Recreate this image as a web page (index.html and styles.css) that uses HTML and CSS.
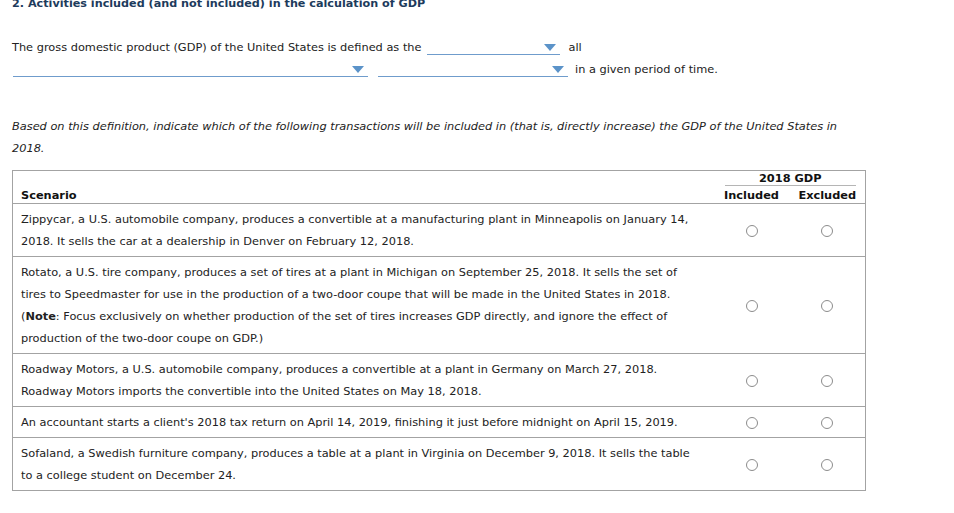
FILE: index.html
```html
<!DOCTYPE html>
<html lang="en">
<head>
<meta charset="utf-8">
<title>GDP activities</title>
<link rel="stylesheet" href="styles.css">
</head>
<body>
<div class="page">
  <h2 class="title">2. Activities included (and not included) in the calculation of GDP</h2>

  <div class="definition">
    <div class="line">
      <span>The gross domestic product (GDP) of the United States is defined as the</span>
      <span class="select w1"><span class="arrow"></span></span>
      <span>all</span>
    </div>
    <div class="line">
      <span class="select w2"><span class="arrow"></span></span>
      <span class="select w3"><span class="arrow"></span></span>
      <span>in a given period of time.</span>
    </div>
  </div>

  <p class="instructions">Based on this definition, indicate which of the following transactions will be included in (that is, directly increase) the GDP of the United States in 2018.</p>

  <table class="gdp">
    <colgroup>
      <col>
      <col class="opt">
      <col class="opt">
    </colgroup>
    <thead>
      <tr class="group-row">
        <th></th>
        <th colspan="2" class="group"><span>2018 GDP</span></th>
      </tr>
      <tr class="head-row">
        <th class="scen">Scenario</th>
        <th>Included</th>
        <th>Excluded</th>
      </tr>
    </thead>
    <tbody>
      <tr>
        <td class="text">Zippycar, a U.S. automobile company, produces a convertible at a manufacturing plant in Minneapolis on January 14, 2018. It sells the car at a dealership in Denver on February 12, 2018.</td>
        <td class="radio"><span class="circle"></span></td>
        <td class="radio"><span class="circle"></span></td>
      </tr>
      <tr>
        <td class="text">Rotato, a U.S. tire company, produces a set of tires at a plant in Michigan on September 25, 2018. It sells the set of tires to Speedmaster for use in the production of a two-door coupe that will be made in the United States in 2018. (<b>Note</b>: Focus exclusively on whether production of the set of tires increases GDP directly, and ignore the effect of production of the two-door coupe on GDP.)</td>
        <td class="radio"><span class="circle"></span></td>
        <td class="radio"><span class="circle"></span></td>
      </tr>
      <tr>
        <td class="text">Roadway Motors, a U.S. automobile company, produces a convertible at a plant in Germany on March 27, 2018. Roadway Motors imports the convertible into the United States on May 18, 2018.</td>
        <td class="radio"><span class="circle"></span></td>
        <td class="radio"><span class="circle"></span></td>
      </tr>
      <tr>
        <td class="text">An accountant starts a client's 2018 tax return on April 14, 2019, finishing it just before midnight on April 15, 2019.</td>
        <td class="radio"><span class="circle"></span></td>
        <td class="radio"><span class="circle"></span></td>
      </tr>
      <tr>
        <td class="text">Sofaland, a Swedish furniture company, produces a table at a plant in Virginia on December 9, 2018. It sells the table to a college student on December 24.</td>
        <td class="radio"><span class="circle"></span></td>
        <td class="radio"><span class="circle"></span></td>
      </tr>
    </tbody>
  </table>
</div>
</body>
</html>
```

FILE: styles.css
```css
html, body {
  margin: 0;
  padding: 0;
  background: #ffffff;
}

body {
  font-family: "DejaVu Sans", Verdana, sans-serif;
  font-size: 11.35px;
  color: #222222;
}

.page {
  padding: 0 0 0 12px;
  width: 854px;
}

.title {
  margin: -3px 0 0 0;
  font-size: 11.2px;
  line-height: 14px;
  font-weight: bold;
  color: #1d3b5c;
}

.definition {
  margin-top: 25px;
}

.line {
  display: flex;
  align-items: center;
  height: 22px;
}

.select {
  display: flex;
  justify-content: flex-end;
  align-items: flex-end;
  height: 16px;
  box-sizing: border-box;
  border-bottom: 1px solid #6f9ccc;
}

.arrow {
  width: 0;
  height: 0;
  border-left: 6.5px solid transparent;
  border-right: 6.5px solid transparent;
  border-top: 7px solid #5b93c9;
  margin: 0 4px 3px 0;
}

.w1 { width: 133px; margin: 0 9px 0 5px; }
.w2 { width: 355px; margin: 0 10px 0 1px; }
.w3 { width: 190px; margin: 0 7px 0 0; }

.instructions {
  margin: 36px 0 0 0;
  font-style: italic;
  line-height: 21.5px;
}

.gdp {
  margin-top: 11px;
  width: 854px;
  border-collapse: collapse;
  border: 1px solid #a3a3a3;
  table-layout: fixed;
}

.gdp col.opt {
  width: 76px;
}

.gdp th {
  font-weight: bold;
  color: #111111;
  padding: 0;
  line-height: 14px;
  text-align: center;
}

.group span {
  display: block;
  margin: 0 9px 0 11px;
  border-bottom: 1px solid #b5b5b5;
}

.head-row th {
  padding: 2px 0 1px 0;
  border-bottom: 1px solid #a3a3a3;
}

.head-row th.scen {
  text-align: left;
  padding-left: 8px;
}

.gdp tbody tr {
  border-bottom: 1px solid #a3a3a3;
}

.gdp td {
  padding: 4px 8px 4px 8px;
  line-height: 22px;
  vertical-align: middle;
}

.gdp td.text {
  padding: 4px 22px 4px 8px;
}

.gdp td.radio {
  text-align: center;
  padding: 0;
}

.circle {
  display: inline-block;
  width: 12px;
  height: 12px;
  box-sizing: border-box;
  border: 1px solid #8c8c8c;
  border-radius: 50%;
  background: #ffffff;
  vertical-align: middle;
}
```
